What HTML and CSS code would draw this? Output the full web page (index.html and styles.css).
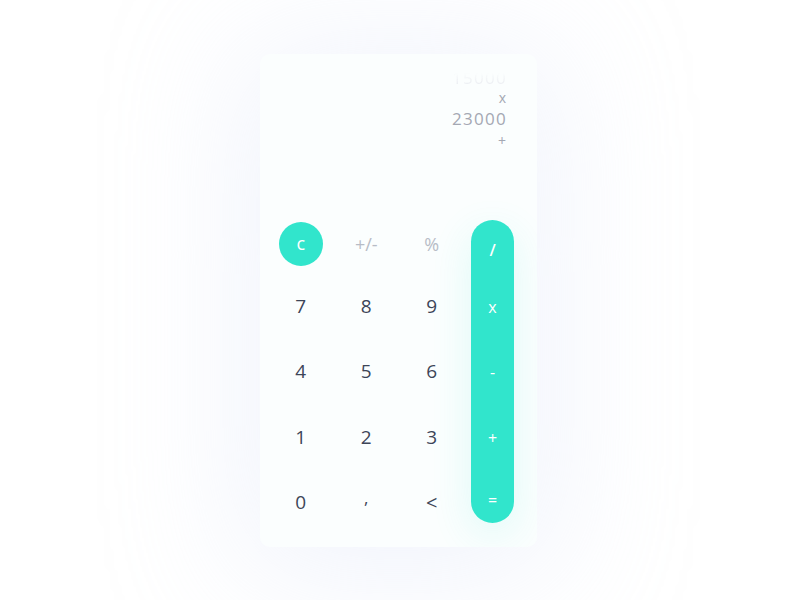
FILE: index.html
```html
<!DOCTYPE html>
<html lang="en">
<head>
<meta charset="utf-8">
<title>Calculator</title>
<link rel="stylesheet" href="styles.css">
</head>
<body>
  <main class="stage">
    <section class="calc">
      <div class="display">
        <div class="line line-old">15000</div>
        <div class="line line-op">x</div>
        <div class="line line-cur">23000</div>
        <div class="line line-op line-next">+</div>
      </div>
      <div class="pad">
        <div class="keys">
          <div class="key"><span class="clear">c</span></div>
          <div class="key key-muted">+/-</div>
          <div class="key key-muted">%</div>
          <div class="key">7</div>
          <div class="key">8</div>
          <div class="key">9</div>
          <div class="key">4</div>
          <div class="key">5</div>
          <div class="key">6</div>
          <div class="key">1</div>
          <div class="key">2</div>
          <div class="key">3</div>
          <div class="key">0</div>
          <div class="key key-comma">,</div>
          <div class="key key-back">&lt;</div>
        </div>
        <div class="ops">
          <div class="op op-div">/</div>
          <div class="op">x</div>
          <div class="op">-</div>
          <div class="op">+</div>
          <div class="op op-eq">=</div>
        </div>
      </div>
    </section>
  </main>
</body>
</html>
```

FILE: styles.css
```css
* {
  box-sizing: border-box;
}

html,
body {
  margin: 0;
  height: 100%;
  background: #ffffff;
  font-family: "Open Sans", "Lato", sans-serif;
}

.stage {
  height: 100%;
  display: flex;
  align-items: center;
  justify-content: center;
}

.calc {
  width: 277px;
  height: 493px;
  margin: 1px 3px 0 0;
  background: #fbfefe;
  border-radius: 10px;
  box-shadow: 0 10px 130px 20px rgba(214, 222, 246, 0.34);
  overflow: hidden;
}

/* running tape of the calculation */
.display {
  height: 168px;
  padding: 14px 30px 0 0;
  display: flex;
  flex-direction: column;
  align-items: flex-end;
  color: #a4a8b3;
  font-size: 17px;
  line-height: 20px;
  letter-spacing: 1.3px;
}

.line-old {
  background: linear-gradient(to bottom, rgba(236, 238, 243, 0) 25%, #e9ebf0 90%);
  -webkit-background-clip: text;
  background-clip: text;
  color: transparent;
}

.line-cur {
  line-height: 22px;
}

.line-op {
  font-size: 14px;
  letter-spacing: 0;
  margin-right: 1px;
}

.line-next {
  margin-top: 1px;
}

/* keypad */
.pad {
  display: flex;
  padding: 0 0 0 8px;
}

.keys {
  display: grid;
  grid-template-columns: repeat(3, 65.5px);
  grid-template-rows: 44px repeat(4, 65.5px);
  color: #3d4558;
  font-size: 19px;
}

.keys .key:nth-child(n + 4) {
  margin-top: 7px;
  margin-bottom: -7px;
}

.key {
  display: flex;
  align-items: center;
  justify-content: center;
}

.key-muted {
  color: #b7bcc6;
  font-size: 18px;
}

.key-comma {
  font-size: 17px;
  padding-bottom: 9px;
}

.key-back {
  font-size: 20px;
}

.clear {
  width: 44px;
  height: 44px;
  border-radius: 50%;
  background: #31e5cc;
  color: #ffffff;
  font-size: 18px;
  display: flex;
  align-items: center;
  justify-content: center;
  padding-bottom: 2px;
}

.ops {
  margin: -2px 0 0 6.5px;
  width: 43px;
  height: 303px;
  border-radius: 22px;
  background: #31e5cc;
  box-shadow: 0 12px 40px rgba(49, 229, 204, 0.14);
  display: grid;
  grid-template-rows: 54px 65px 66px 66px 52px;
  color: #ffffff;
  font-size: 16px;
}

.op {
  display: flex;
  align-items: center;
  justify-content: center;
}

.op-div {
  padding-top: 6px;
  font-weight: 600;
}

.op-eq {
  padding-top: 6px;
}
```
